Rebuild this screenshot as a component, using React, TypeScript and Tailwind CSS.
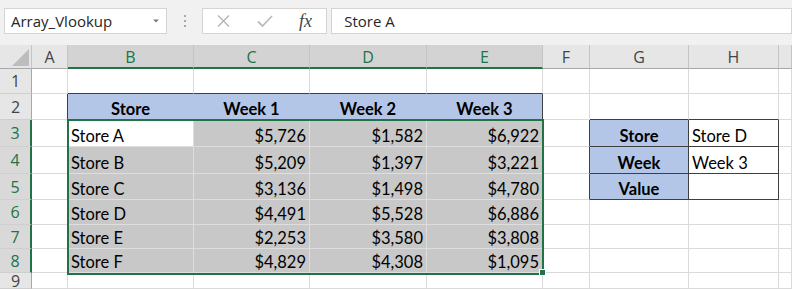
import React from 'react';

const colLetters = ['A', 'B', 'C', 'D', 'E', 'F', 'G', 'H', ''];
const rowHeights = [25, 26, 27, 27, 26, 25, 24, 24, 16];

const stores = ['Store A', 'Store B', 'Store C', 'Store D', 'Store E', 'Store F'];
const week1 = ['$5,726', '$5,209', '$3,136', '$4,491', '$2,253', '$4,829'];
const week2 = ['$1,582', '$1,397', '$1,498', '$5,528', '$3,580', '$4,308'];
const week3 = ['$6,922', '$3,221', '$4,780', '$6,886', '$3,808', '$1,095'];

type CellSpec = {
  text?: string;
  bg: string;
  r: string;
  b: string;
  align: string;
  bold?: boolean;
};

// border colour classes, written out so tailwind sees them
const R = { grid: 'border-r-[#dadada]', dark: 'border-r-[#3f3f3f]', blue: 'border-r-[#b4c6e7]', sel: 'border-r-[#dedede]' };
const B = { grid: 'border-b-[#dadada]', dark: 'border-b-[#3f3f3f]', blue: 'border-b-[#b4c6e7]', sel: 'border-b-[#dedede]' };

function cellAt(row: number, col: number): CellSpec {
  const c: CellSpec = { bg: 'bg-white', r: R.grid, b: B.grid, align: 'justify-start' };
  const inTable = col >= 1 && col <= 4;

  if (row === 1 && inTable) c.b = B.dark;
  if (row === 2 && col === 0) c.r = R.dark;
  if (row === 2 && inTable) {
    c.bg = 'bg-[#b4c6e7]';
    c.bold = true;
    c.align = 'justify-center';
    c.r = col === 4 ? R.dark : R.blue;
    c.b = B.blue;
    c.text = ['Store', 'Week 1', 'Week 2', 'Week 3'][col - 1];
  }
  if (row === 2 && (col === 6 || col === 7)) c.b = B.dark;

  if (row >= 3 && row <= 8 && inTable) {
    const i = row - 3;
    c.bg = row === 3 && col === 1 ? 'bg-white' : 'bg-[#c8c8c8]';
    c.r = R.sel;
    c.b = B.sel;
    c.align = col === 1 ? 'justify-start' : 'justify-end';
    c.text = [stores, week1, week2, week3][col - 1][i];
  }

  if (row >= 3 && row <= 5) {
    if (col === 5) c.r = R.dark;
    if (col === 6) {
      c.bg = 'bg-[#b4c6e7]';
      c.bold = true;
      c.align = 'justify-center';
      c.r = R.dark;
      c.b = B.dark;
      c.text = ['Store', 'Week', 'Value'][row - 3];
    }
    if (col === 7) {
      c.r = R.dark;
      c.b = B.dark;
      c.text = ['Store D', 'Week 3', ''][row - 3];
    }
  }
  return c;
}

function TopBar() {
  return (
    <div className="h-[45px] bg-[#f1f1f1] flex items-start pt-[8px] pl-[4px] font-['Open_Sans',sans-serif] text-[#262626]">
      <div className="w-[166px] h-[26px] bg-white border border-[#d4d4d4] flex items-center justify-between pl-[6px] pr-[7px]">
        <span className="text-[15px] leading-none">Array_Vlookup</span>
        <svg width="6" height="4" viewBox="0 0 6 4"><path d="M0 0.5 H6 L3 3.5 Z" fill="#7a7a7a" /></svg>
      </div>
      <div className="w-[36px] h-[26px] flex flex-col items-center justify-center gap-[3px]">
        <span className="w-[2px] h-[2px] bg-[#a9a9a9]" />
        <span className="w-[2px] h-[2px] bg-[#a9a9a9]" />
        <span className="w-[2px] h-[2px] bg-[#a9a9a9]" />
      </div>
      <div className="w-[125px] h-[26px] bg-white border border-[#d4d4d4] flex items-center">
        <div className="w-[42px] flex justify-center">
          <svg width="13" height="12" viewBox="0 0 13 12">
            <path d="M1 0.5 L12 11.5 M12 0.5 L1 11.5" stroke="#b3b3b3" strokeWidth="1.3" fill="none" />
          </svg>
        </div>
        <div className="w-[41px] flex justify-center">
          <svg width="16" height="12" viewBox="0 0 16 12">
            <path d="M1 6.5 L5.5 11 L15 1" stroke="#bcbcbc" strokeWidth="1.8" fill="none" />
          </svg>
        </div>
        <div className="w-[42px] flex justify-center">
          <span className="font-['Liberation_Serif',serif] italic text-[18px] leading-none text-[#444444]">fx</span>
        </div>
      </div>
      <div className="ml-[4px] w-[470px] h-[26px] bg-white border border-[#d4d4d4] flex items-center pl-[12px]">
        <span className="text-[15px] leading-none">Store A</span>
      </div>
    </div>
  );
}

function ColumnHeaders() {
  return (
    <>
      <div className="bg-[#e6e6e6] border-r border-b border-r-[#c4c4c4] border-b-[#a8a8a8] relative">
        <svg className="absolute right-[2px] bottom-[2px]" width="17" height="17" viewBox="0 0 17 17">
          <path d="M0 17 L17 17 L17 0 Z" fill="#bdbdbd" />
        </svg>
      </div>
      {colLetters.map((l, i) => {
        const sel = i >= 1 && i <= 4;
        return (
          <div
            key={i}
            className={
              sel
                ? 'bg-[#d3d3d3] border-r border-r-[#c4c4c4] border-b-2 border-b-[#217346] text-[#217346] flex items-center justify-center text-[16px] pt-[1px]'
                : 'bg-[#e6e6e6] border-r border-r-[#c4c4c4] border-b border-b-[#a8a8a8] text-[#444444] flex items-center justify-center text-[16px] pt-[1px]'
            }
          >
            {l}
          </div>
        );
      })}
    </>
  );
}

export default function App() {
  return (
    <div className="w-[792px] h-[289px] overflow-hidden bg-white">
      <TopBar />
      <div className="relative">
        <div className="grid grid-cols-[32px_36px_126px_116px_117px_116px_47px_99px_90px_13px] grid-rows-[24px_25px_26px_27px_27px_26px_25px_24px_24px_16px] font-['Open_Sans',sans-serif]">
          <ColumnHeaders />
          {rowHeights.map((_, ri) => {
            const row = ri + 1;
            const sel = row >= 3 && row <= 8;
            return (
              <React.Fragment key={row}>
                <div
                  className={
                    sel
                      ? 'bg-[#d9d9d9] border-r-2 border-r-[#217346] border-b border-b-[#cfcfcf] text-[#217346] flex items-center justify-center text-[16px]'
                      : 'bg-[#e6e6e6] border-r border-r-[#a8a8a8] border-b border-b-[#cfcfcf] text-[#444444] flex items-center justify-center text-[16px]'
                  }
                >
                  {row}
                </div>
                {colLetters.map((_, ci) => {
                  const c = cellAt(row, ci);
                  return (
                    <div
                      key={ci}
                      className={`flex items-end ${c.align} ${c.bg} border-r border-b ${c.r} ${c.b} px-[3px] overflow-hidden whitespace-nowrap font-['Lato',sans-serif] text-[16.5px] leading-[20px] text-black ${c.bold ? 'font-bold' : 'font-normal'}`}
                    >
                      {c.text}
                    </div>
                  );
                })}
              </React.Fragment>
            );
          })}
        </div>
        {/* selection outline B3:E8 */}
        <div className="absolute left-[67px] top-[74px] w-[477px] h-[156px] border-2 border-[#217346] pointer-events-none" />
        <div className="absolute left-[539px] top-[224px] w-[7px] h-[7px] bg-[#217346] border border-white" />
      </div>
    </div>
  );
}
